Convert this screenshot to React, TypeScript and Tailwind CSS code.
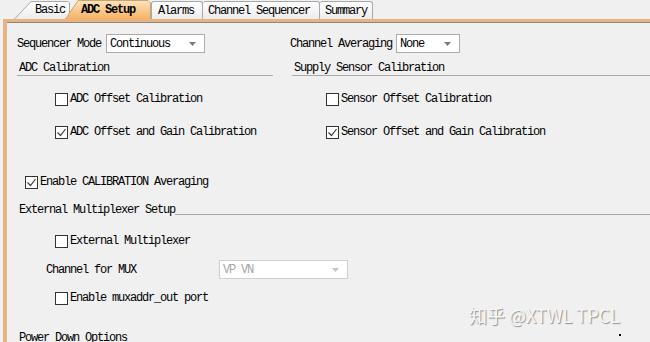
import React from 'react';

const font = "[font-family:'Liberation_Mono',monospace] text-[12px] tracking-[-1.2px] text-black";

const Checkbox: React.FC<{ checked?: boolean }> = ({ checked }) => (
  <span className="inline-flex h-[13px] w-[13px] shrink-0 items-center justify-center border border-[#333] bg-white">
    {checked && (
      <svg width="11" height="11" viewBox="0 0 11 11">
        <path d="M1.5 5.5 L4.5 8.5 L9.5 2" fill="none" stroke="#3c3c3c" strokeWidth="1.2" />
      </svg>
    )}
  </span>
);

const Check: React.FC<{ label: string; checked?: boolean; className?: string }> = ({ label, checked, className }) => (
  <div className={`flex items-center h-[16px] ${className ?? ''}`}>
    <Checkbox checked={checked} />
    <span className="ml-[2px] whitespace-nowrap">{label}</span>
  </div>
);

const Select: React.FC<{ value: string; width: string; disabled?: boolean }> = ({ value, width, disabled }) => (
  <div
    className={`flex h-[19px] items-center justify-between border bg-white pl-[3px] pr-[8px] ${width} ${
      disabled ? 'border-[#cfcfcf] text-[#a6a6a6]' : 'border-[#acacac]'
    }`}
  >
    <span className="whitespace-nowrap">{value}</span>
    <svg width="7" height="4" viewBox="0 0 7 4">
      <path d="M0 0 H7 L3.5 4 Z" fill={disabled ? '#c4c4c4' : '#7a7a7a'} />
    </svg>
  </div>
);

const Heading: React.FC<{ label: string; className?: string }> = ({ label, className }) => (
  <div className={`h-[14px] border-b border-[#a8a8a8] pl-[2px] leading-[13px] ${className ?? ''}`}>{label}</div>
);

const Tabs: React.FC = () => (
  <div className="flex h-[19px] items-end pl-[14px]">
    <div className="relative h-[18px] w-[56px]">
      <svg className="absolute inset-0" width="56" height="18" viewBox="0 0 56 18">
        <defs>
          <linearGradient id="tabg" x1="0" y1="0" x2="0" y2="1">
            <stop offset="0" stopColor="#ffffff" />
            <stop offset="1" stopColor="#ececec" />
          </linearGradient>
        </defs>
        <path d="M0.5 18 L17 0.5 H54 L55.5 2 V18" fill="url(#tabg)" stroke="#a9a9a9" />
      </svg>
      <span className="absolute left-[21px] top-[2px] leading-[14px]">Basic</span>
    </div>
    <div className="relative -ml-[5px] h-[19px] w-[86px]">
      <svg className="absolute inset-0" width="86" height="19" viewBox="0 0 86 19">
        <defs>
          <linearGradient id="taba" x1="0" y1="0" x2="0" y2="1">
            <stop offset="0" stopColor="#fde3bb" />
            <stop offset="1" stopColor="#f6b264" />
          </linearGradient>
        </defs>
        <path d="M0.5 19 L13 0.5 H83 L85.5 3 V19" fill="url(#taba)" stroke="#c9a27a" />
      </svg>
      <span className="absolute left-[16px] top-[3px] font-bold leading-[14px]">ADC Setup</span>
    </div>
    <div className="flex h-[18px] w-[52px] items-center rounded-t-[3px] border border-b-0 border-[#a9a9a9] bg-gradient-to-b from-white to-[#ececec] pl-[6px]">
      Alarms
    </div>
    <div className="flex h-[18px] w-[117px] items-center rounded-t-[3px] border border-b-0 border-l-0 border-[#a9a9a9] bg-gradient-to-b from-white to-[#ececec] pl-[5px]">
      Channel Sequencer
    </div>
    <div className="flex h-[18px] w-[53px] items-center rounded-t-[3px] border border-b-0 border-l-0 border-[#a9a9a9] bg-gradient-to-b from-white to-[#ececec] pl-[5px]">
      Summary
    </div>
  </div>
);

export default function App() {
  return (
    <div className={`relative h-[342px] w-[650px] overflow-hidden bg-[#f0f0f0] ${font}`}>
      <Tabs />
      <div className="ml-[3px] h-[330px] border-l-[4px] border-t-[3px] border-[#e6b383]">
        <div className="border-t border-[#8f8578]">
          {/* top row with the two dropdowns */}
          <div className="mt-[11px] flex h-[19px] items-center">
            <div className="flex w-[283px] items-center pl-[10px]">
              <span className="mr-[5px] whitespace-nowrap">Sequencer Mode</span>
              <Select value="Continuous" width="w-[99px]" />
            </div>
            <div className="flex items-center">
              <span className="mr-[4px] whitespace-nowrap">Channel Averaging</span>
              <Select value="None" width="w-[64px]" />
            </div>
          </div>

          <div className="flex">
            <div className="w-[285px] pl-[10px]">
              <Heading label="ADC Calibration" className="mt-[9px] w-[256px]" />
              <Check label="ADC Offset Calibration" className="mt-[15px] pl-[38px]" />
              <Check label="ADC Offset and Gain Calibration" checked className="mt-[17px] pl-[38px]" />
            </div>
            <div className="flex-1">
              <Heading label="Supply Sensor Calibration" className="mt-[9px]" />
              <Check label="Sensor Offset Calibration" className="mt-[15px] pl-[34px]" />
              <Check label="Sensor Offset and Gain Calibration" checked className="mt-[17px] pl-[34px]" />
            </div>
          </div>

          <Check label="Enable CALIBRATION Averaging" checked className="mt-[34px] pl-[18px]" />

          <div className="mt-[14px] flex h-[13px] items-end pl-[12px]">
            <span className="whitespace-nowrap leading-[13px]">External Multiplexer Setup</span>
            <div className="mb-[2px] flex-1 border-b border-[#a8a8a8]" />
          </div>

          <Check label="External Multiplexer" className="mt-[16px] pl-[48px]" />

          <div className="mt-[11px] flex h-[19px] items-center pl-[39px]">
            <span className="w-[173px] whitespace-nowrap">Channel for MUX</span>
            <Select value="VP VN" width="w-[129px]" disabled />
          </div>

          <Check label="Enable muxaddr_out port" className="mt-[11px] pl-[48px]" />

          <div className="mt-[25px] h-[14px] pl-[12px] leading-[14px]">Power Down Options</div>
        </div>
      </div>

      <div className="absolute left-[469px] top-[302px] whitespace-nowrap [font-family:'Noto_Sans_CJK_SC',sans-serif] text-[18px] tracking-normal text-[#f7f7f7] [text-shadow:1px_1px_1px_#8d8d8d]">
        知乎 @XTWL TPCL
      </div>
      <div className="absolute left-[619px] top-[334px] h-[2px] w-[2px] bg-black" />
    </div>
  );
}
